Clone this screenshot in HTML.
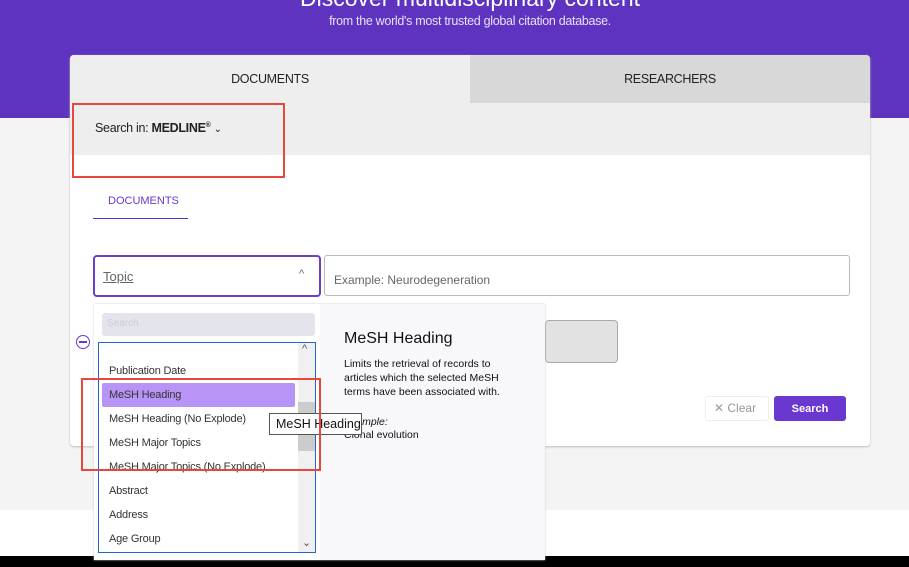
<!DOCTYPE html>
<html><head><style>
*{margin:0;padding:0;box-sizing:border-box}
body{width:909px;height:567px;overflow:hidden;background:#f4f4f4;font-family:"Liberation Sans",sans-serif;position:relative;color:#222}
.a{position:absolute;white-space:nowrap}
</style></head><body>
<div class="a" style="left:0;top:0;width:909px;height:118px;background:#5e33bf"></div>
<div class="a" style="left:0;top:-15px;width:940px;text-align:center;color:#fff;font-size:23px">Discover multidisciplinary content</div>
<div class="a" style="left:0;top:14px;width:940px;text-align:center;color:#e8e0f8;font-size:12.5px;letter-spacing:-0.3px">from the world's most trusted global citation database.</div>
<div class="a" style="left:0;top:510px;width:909px;height:46px;background:#fff"></div>
<div class="a" style="left:0;top:556px;width:909px;height:11px;background:#000"></div>

<div class="a" style="left:70px;top:55px;width:800px;height:391px;background:#fff;border-radius:4px;box-shadow:0 1px 2px #bbb;overflow:hidden">
 <div class="a" style="left:0;top:0;width:400px;height:48px;background:#eee;text-align:center;line-height:48px;font-size:12.5px;letter-spacing:-0.3px">DOCUMENTS</div>
 <div class="a" style="left:400px;top:0;width:400px;height:48px;background:#d8d8d8;text-align:center;line-height:48px;font-size:12.5px;letter-spacing:-0.3px">RESEARCHERS</div>
 <div class="a" style="left:0;top:48px;width:800px;height:52px;background:#eee"></div>
 <div class="a" style="left:25px;top:66px;font-size:12.5px;letter-spacing:-0.3px">Search in: <b>MEDLINE</b><sup style="font-size:7px;font-weight:bold">®</sup> <span style="font-size:10px">⌄</span></div>
 <div class="a" style="left:38px;top:140px;font-size:11px;color:#6a38d0">DOCUMENTS</div>
 <div class="a" style="left:23px;top:163px;width:95px;height:1px;background:#5e33bf"></div>
 <div class="a" style="left:254px;top:200px;width:526px;height:41px;border:1px solid #bbb;border-radius:3px;font-size:12px;color:#666;padding:17px 0 0 9px">Example: Neurodegeneration</div>
 <div class="a" style="left:475px;top:265px;width:73px;height:43px;background:#e2e2e2;border:1px solid #aaa;border-radius:4px"></div>
 <div class="a" style="left:635px;top:341px;width:64px;height:25px;border:1px solid #eee;border-radius:3px;font-size:12px;color:#999;line-height:23px;padding-left:8px">✕ Clear</div>
 <div class="a" style="left:704px;top:341px;width:72px;height:25px;background:#6a38d0;border-radius:3px;font-size:11px;font-weight:bold;color:#fff;line-height:27px;text-align:center">Search</div>
</div>

<div class="a" style="left:72px;top:103px;width:213px;height:75px;border:2px solid #e8473e"></div>
<div class="a" style="left:93px;top:255px;width:228px;height:42px;border:2px solid #6b3fc8;border-radius:4px;background:#fff"></div>
<div class="a" style="left:103px;top:269px;font-size:13px;color:#666;text-decoration:underline">Topic</div>
<div class="a" style="left:299px;top:268px;font-size:11px;color:#666">^</div>
<div class="a" style="left:76px;top:335px;width:14px;height:14px;border:1.5px solid #6a38d0;border-radius:50%"></div>
<div class="a" style="left:79px;top:341px;width:8px;height:1.5px;background:#6a38d0"></div>

<div class="a" style="left:94px;top:304px;width:451px;height:256px;background:#f8f8fa;box-shadow:0 0 2px #ccc"></div>
<div class="a" style="left:94px;top:304px;width:226px;height:256px;background:#fff"></div>
<div class="a" style="left:102px;top:313px;width:213px;height:23px;background:#e4e4ec;border-radius:3px;font-size:10px;color:#ccd;padding:5px 0 0 5px">Search</div>
<div class="a" style="left:98px;top:342px;width:218px;height:211px;border:1px solid #2266cc;background:#fff"></div>
<div class="a" style="left:298px;top:343px;width:17px;height:209px;background:#f0f0f0"></div>
<div class="a" style="left:298px;top:402px;width:17px;height:49px;background:#ccc"></div>
<div class="a" style="left:302px;top:343px;font-size:11px;color:#555">^</div>
<div class="a" style="left:302px;top:536px;font-size:11px;color:#555">⌄</div>
<div class="a" style="left:102px;top:383px;width:193px;height:24px;background:#b794f6;border-radius:2px"></div>
<div class="a" style="left:109px;top:359px;font-size:11px;line-height:24px;color:#333;letter-spacing:-0.2px">
Publication Date<br>MeSH Heading<br>MeSH Heading (No Explode)<br>MeSH Major Topics<br>MeSH Major Topics (No Explode)<br>Abstract<br>Address<br>Age Group</div>

<div class="a" style="left:344px;top:330px;font-size:16px;color:#111">MeSH Heading</div>
<div class="a" style="left:344px;top:357px;font-size:10.5px;line-height:14px;color:#111">Limits the retrieval of records to<br>articles which the selected MeSH<br>terms have been associated with.</div>
<div class="a" style="left:344px;top:416px;font-size:10.5px;font-style:italic;color:#111">Example:</div>
<div class="a" style="left:344px;top:429px;font-size:10.5px;color:#111">Clonal evolution</div>
<div class="a" style="left:269px;top:413px;width:93px;height:22px;background:#fff;border:1px solid #555;font-size:12.5px;padding:3px 0 0 6px;color:#111">MeSH Heading</div>
<div class="a" style="left:81px;top:378px;width:240px;height:93px;border:2px solid #e8473e"></div>
</body></html>
